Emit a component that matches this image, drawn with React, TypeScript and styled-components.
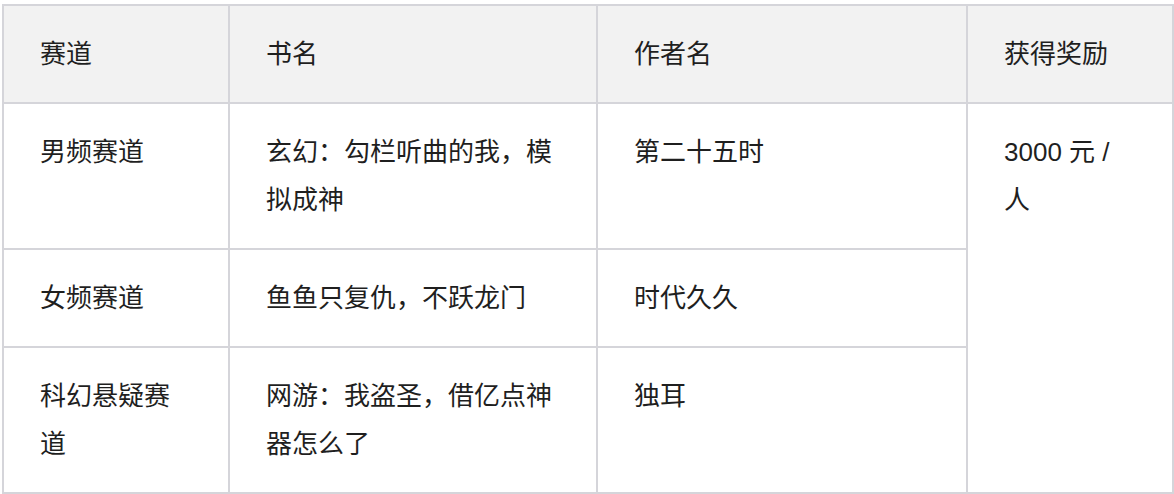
import React from 'react'
import styled, { createGlobalStyle } from 'styled-components'

const GlobalStyle = createGlobalStyle`
  html, body {
    margin: 0;
    padding: 0;
    background: #ffffff;
  }
  body {
    font-family: 'Liberation Sans', 'Noto Sans CJK SC', sans-serif;
    color: #1f1f1f;
  }
`

const Page = styled.div`
  padding: 4px 0 0 2px;
`

const Table = styled.div`
  width: 1172px;
  box-sizing: border-box;
  display: grid;
  grid-template-columns: 224px 366px 368px 204px;
  gap: 2px;
  padding: 2px;
  background: #d5d5da;
`

const Cell = styled.div<{ $head?: boolean; $rows?: number }>`
  background: ${({ $head }) => ($head ? '#f2f2f2' : '#ffffff')};
  padding: 24px 36px;
  font-size: 26px;
  line-height: 48px;
  min-height: 48px;
  ${({ $rows }) => ($rows ? `grid-row: span ${$rows};` : '')}
`

const heads = ['赛道', '书名', '作者名', '获得奖励']

const rows = [
  { track: '男频赛道', book: '玄幻：勾栏听曲的我，模拟成神', author: '第二十五时' },
  { track: '女频赛道', book: '鱼鱼只复仇，不跃龙门', author: '时代久久' },
  { track: '科幻悬疑赛道', book: '网游：我盗圣，借亿点神器怎么了', author: '独耳' },
]

export default function App() {
  return (
    <>
      <GlobalStyle />
      <Page>
        <Table>
          {heads.map((h) => (
            <Cell key={h} $head>
              {h}
            </Cell>
          ))}
          {rows.map((r, i) => (
            <React.Fragment key={r.track}>
              <Cell>{r.track}</Cell>
              <Cell>{r.book}</Cell>
              <Cell>{r.author}</Cell>
              {i === 0 && <Cell $rows={3}>3000 元 / 人</Cell>}
            </React.Fragment>
          ))}
        </Table>
      </Page>
    </>
  )
}
